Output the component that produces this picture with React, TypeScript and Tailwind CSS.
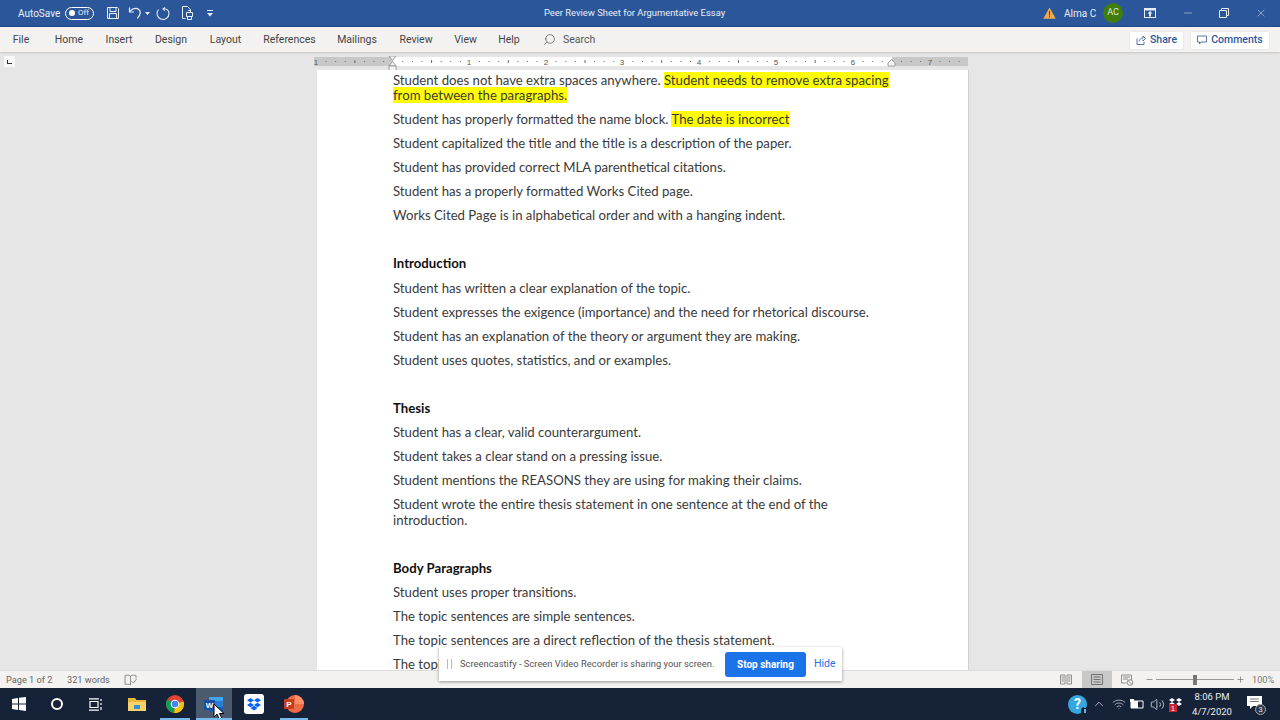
import { ChevronUp, Minus, Plus, Search, Volume2, Wifi, X } from "lucide-react";

const tabs = [
  ["File", "w-[42px]"],
  ["Home", "w-[54px]"],
  ["Insert", "w-[46px]"],
  ["Design", "w-[58px]"],
  ["Layout", "w-[51px]"],
  ["References", "w-[77px]"],
  ["Mailings", "w-[58px]"],
  ["Review", "w-[60px]"],
  ["View", "w-[39px]"],
  ["Help", "w-[48px]"],
];

type Para = { text?: string; mark?: string; bold?: boolean; blank?: boolean; cls?: string };

const paragraphs: Para[] = [
  { text: "Student does not have extra spaces anywhere. ", mark: "Student needs to remove extra spacing from between the paragraphs." },
  { text: "Student has properly formatted the name block. ", mark: "The date is incorrect" },
  { text: "Student capitalized the title and the title is a description of the paper." },
  { text: "Student has provided correct MLA parenthetical citations." },
  { text: "Student has a properly formatted Works Cited page." },
  { text: "Works Cited Page is in alphabetical order and with a hanging indent." },
  { blank: true },
  { text: "Introduction", bold: true, cls: "mb-[10px]" },
  { text: "Student has written a clear explanation of the topic." },
  { text: "Student expresses the exigence (importance) and the need for rhetorical discourse." },
  { text: "Student has an explanation of the theory or argument they are making." },
  { text: "Student uses quotes, statistics, and or examples." },
  { blank: true },
  { text: "Thesis", bold: true },
  { text: "Student has a clear, valid counterargument." },
  { text: "Student takes a clear stand on a pressing issue." },
  { text: "Student mentions the REASONS they are using for making their claims." },
  { text: "Student wrote the entire thesis statement in one sentence at the end of the introduction.", cls: "leading-[15.500px]" },
  { blank: true },
  { text: "Body Paragraphs", bold: true },
  { text: "Student uses proper transitions." },
  { text: "The topic sentences are simple sentences." },
  { text: "The topic sentences are a direct reflection of the thesis statement." },
  { text: "The topic sentences are clear and concise." },
];

function Ruler() {
  const ticks: React.ReactNode[] = [];
  for (let i = 0; i < 68; i++) {
    const x = 2 + i * 9.59;
    const major = i % 8 === 0;
    const half = i % 8 === 4;
    if (major) continue;
    ticks.push(
      <rect key={i} x={x} y={half ? 3 : 4} width="1" height={half ? 3 : 1} fill="#6b6b6b" />
    );
  }
  const nums = [
    [2, "1"],
    [155, "1"],
    [232, "2"],
    [308, "3"],
    [385, "4"],
    [462, "5"],
    [539, "6"],
    [616, "7"],
  ] as const;
  return (
    <svg width="654" height="15" viewBox="0 0 654 15" className="block">
      <g transform="translate(0 1)">
        <rect x="0" y="0" width="654" height="9" fill="#c8c8c8" />
        <rect x="78" y="0" width="500" height="9" fill="#ffffff" />
        {ticks}
        {nums.map(([x, n], i) => (
          <text key={i} x={x} y="7.5" fontSize="8" textAnchor="middle" fill="#555" fontFamily="Liberation Sans, sans-serif">
            {n}
          </text>
        ))}
        <path d="M75 -1h7l-3.5 4.5zM75 9h7l-3.5 -4.5z" fill="#f4f4f4" stroke="#8a8a8a" strokeWidth="0.8" />
        <rect x="75" y="9" width="7" height="5" fill="#f4f4f4" stroke="#8a8a8a" strokeWidth="0.8" />
        <path d="M574 9V6l3.500-3.500 3.500 3.500v3z" fill="#f4f4f4" stroke="#8a8a8a" strokeWidth="0.8" />
      </g>
    </svg>
  );
}

function TitleBar() {
  return (
    <div className="h-[27px] shrink-0 bg-[#2b579a] flex items-center text-[#e8eef7] border-b border-[#234a86]">
      <span className="ml-[18px] w-[41px] text-[10px] whitespace-nowrap">AutoSave</span>
      <div className="ml-[6px] w-[29px] h-[13px] rounded-full border border-white flex items-center">
        <span className="ml-[3px] w-[6px] h-[6px] rounded-full bg-white" />
        <span className="ml-[3px] text-[8px] leading-none">Off</span>
      </div>
      <svg width="16" height="16" viewBox="0 0 16 16" className="ml-[11px]" fill="none" stroke="#e8eef7" strokeWidth="1">
        <path d="M2.500 2.500h10l1 1v10h-11z" />
        <path d="M5 2.500v4h6v-4M4.500 13.500v-5h7v5" />
      </svg>
      <svg width="16" height="16" viewBox="0 0 16 16" className="ml-[6px]" fill="none" stroke="#e8eef7" strokeWidth="1.200">
        <path d="M2.500 2.500v4.500h4.500" />
        <path d="M2.800 6.800c2-3.500 6.500-4.300 9-2.300 2.500 2 1.800 5.500-1.500 8.800" />
      </svg>
      <svg width="5" height="3" viewBox="0 0 5 3" className="ml-[2px]"><path d="M0 0h5l-2.500 3z" fill="#e8eef7" /></svg>
      <svg width="16" height="16" viewBox="0 0 16 16" className="ml-[5px]" fill="none" stroke="#e8eef7" strokeWidth="1.100">
        <path d="M10 2.500l-2 1.500 2 1.500" />
        <path d="M9 3.700c3.200 0 5 2.200 5 4.800a6 6 0 1 1-10.500-4" />
      </svg>
      <svg width="14" height="16" viewBox="0 0 14 16" className="ml-[9px]" fill="none" stroke="#e8eef7" strokeWidth="1">
        <path d="M2.500 1.500h5l3 3v3M2.500 1.500v12h3" />
        <path d="M6.500 7.500h6v4h-6zM7.500 11.500v3h4v-3M8 5.500h2" />
      </svg>
      <svg width="6" height="7" viewBox="0 0 6 7" className="ml-[13px]"><path d="M0 0h6v1H0zM0 3h6L3 6.500z" fill="#e8eef7" /></svg>
      <span className="absolute left-[544px] text-[9.400px] text-[#e8eef7] whitespace-nowrap">Peer Review Sheet for Argumentative Essay</span>
      <div className="ml-auto flex items-center h-full">
        <svg width="13" height="12" viewBox="0 0 13 12"><path d="M6.500 0.500L12.800 11.800H0.200z" fill="#f0a94a" /><path d="M6 4h1v4.500H6zM6 9.300h1v1H6z" fill="#5a3a10" /></svg>
        <span className="ml-[8px] w-[31px] text-[10px] whitespace-nowrap">Alma C</span>
        <span className="ml-[8px] w-[20px] h-[20px] rounded-full bg-[#3e7d0e] text-[9px] flex items-center justify-center text-[#dfe9d6]">AC</span>
        <svg width="12" height="10" viewBox="0 0 12 10" className="ml-[21px]"><rect x="0.500" y="0.500" width="11" height="9" fill="none" stroke="#e8eef7" /><rect x="0.500" y="0.500" width="11" height="2" fill="#e8eef7" /><path d="M6 3l2.500 2.500h-1.500v3h-2v-3H3.500z" fill="#e8eef7" /></svg>
        <Minus className="ml-[26px] w-[12px] h-[12px]" strokeWidth={1} />
        <svg width="10" height="10" viewBox="0 0 10 10" className="ml-[25px]" fill="none" stroke="#e8eef7"><path d="M.5 2.500h7v7h-7zM2.500 2.500v-2h7v7h-2" /></svg>
        <X className="ml-[26px] mr-[13px] w-[12px] h-[12px]" strokeWidth={1} />
      </div>
    </div>
  );
}

function Ribbon() {
  return (
    <div className="h-[25px] shrink-0 bg-[#f3f2f1] flex items-center text-[10.500px] text-[#444] shadow-[0_1px_2px_rgba(0,0,0,0.15)] z-10">
      {tabs.map(([t, w]) => (
        <span key={t} className={`${w} text-center`}>{t}</span>
      ))}
      <Search className="ml-[10px] w-[13px] h-[13px] text-[#555] -scale-x-100" strokeWidth={1.300} />
      <span className="ml-[7px] text-[#555]">Search</span>
      <div className="ml-auto mt-[1px] flex items-center gap-[8px] mr-[11px]">
        <div className="h-[17px] w-[53px] bg-white shadow-[0_0_1px_rgba(0,0,0,0.2)] flex items-center justify-center gap-[4px] text-[#2b579a] text-[10.500px] font-medium">
          <svg width="10" height="10" viewBox="0 0 10 10" fill="none" stroke="#2b579a" strokeWidth="0.800"><path d="M1 3.500v6h7v-3M3 6.500c.5-2.500 2.500-3.500 4-3.500V1l2.500 2.500L7 6V4.500" /></svg>
          Share
        </div>
        <div className="h-[17px] w-[78px] bg-white shadow-[0_0_1px_rgba(0,0,0,0.2)] flex items-center justify-center gap-[4px] text-[#2b579a] text-[10.500px] font-medium">
          <svg width="10" height="10" viewBox="0 0 10 10" fill="none" stroke="#2b579a" strokeWidth="0.800"><path d="M.5 1h9v6H4L2.500 9V7h-2z" /></svg>
          Comments
        </div>
      </div>
    </div>
  );
}

function Document() {
  return (
    <div className="flex-1 min-h-0 bg-[#e6e6e6] relative overflow-hidden flex flex-col items-start">
      <div className="absolute left-[4px] top-[4px] w-[11px] h-[11px] bg-[#f7f7f7] flex items-center justify-center">
        <span className="w-[5px] h-[4px] border-l border-b border-[#333]" />
      </div>
      <div className="ml-[314px] mt-[4px] h-[14px] shrink-0">
        <Ruler />
      </div>
      <div className="ml-[317px] w-[652px] flex-1 bg-white pl-[76px] pr-[76px] pt-[3px] text-[#3a3a3a] [font-family:'Lato',sans-serif] text-[13.200px] leading-[15px] border-r border-[#d0d0d0]">
        {paragraphs.map((p, i) =>
          p.blank ? (
            <p key={i} className="h-[15px] mb-[9px]" />
          ) : (
            <p key={i} className={`${p.cls?.includes("mb-") ? "" : "mb-[9px]"} ${p.cls ?? ""} ${p.bold ? "font-bold text-[#111]" : ""}`}>
              {p.text}
              {p.mark && <mark className="bg-[#ffff00] text-[#3a3a3a]">{p.mark}</mark>}
            </p>
          )
        )}
      </div>
    </div>
  );
}

function SharePopup() {
  return (
    <div className="absolute left-[439px] top-[647px] w-[403px] h-[34px] bg-white shadow-[0_1px_3px_rgba(0,0,0,0.4)] flex items-center z-10">
      <span className="ml-[8px] w-[5px] h-[10px] border-x border-[#bbb]" />
      <span className="ml-[8px] w-[257px] whitespace-nowrap text-[9.400px] text-[#555]">Screencastify - Screen Video Recorder is sharing your screen.</span>
      <span className="ml-[8px] w-[81px] h-[25px] rounded-[3px] bg-[#1a73e8] text-white text-[10px] font-bold flex items-center justify-center whitespace-nowrap">Stop sharing</span>
      <span className="ml-[8px] text-[10.500px] text-[#1a73e8]">Hide</span>
    </div>
  );
}

function StatusBar() {
  return (
    <div className="h-[18px] shrink-0 bg-[#f3f2f1] flex items-center text-[9.200px] text-[#666] border-t border-[#dcdcdc]">
      <span className="ml-[6px] w-[46px] whitespace-nowrap">Page 1 of 2</span>
      <span className="ml-[15px] w-[42px] whitespace-nowrap">321 words</span>
      <svg width="13" height="12" viewBox="0 0 13 12" className="ml-[15px]" fill="none" stroke="#777" strokeWidth="0.800"><path d="M6.500 2v9M6.500 2C5 1 3 1 1 1.500v9c2-.5 4-.5 5.500.5M6.500 2C8 1 10 1 12 1.500v3M7.500 7l2 2 3-4" /></svg>
      <div className="ml-auto flex items-center h-full">
        <svg width="12" height="11" viewBox="0 0 12 11" fill="none" stroke="#777" strokeWidth="0.800"><path d="M.5 1h4.500v9H.5zM7 1h4.500v9H7zM1.500 3h2.500M1.500 5h2.500M1.500 7h2.500M8 3h2.500M8 5h2.500M8 7h2.500" /></svg>
        <div className="ml-[10px] w-[30px] h-full bg-[#c8c8c8] flex items-center justify-center">
          <svg width="12" height="11" viewBox="0 0 12 11" fill="none" stroke="#666" strokeWidth="0.900"><path d="M.5.500h11v10H.5zM2.500 3h7M2.500 5.500h7M2.500 8h7" /></svg>
        </div>
        <svg width="13" height="12" viewBox="0 0 13 12" className="ml-[9px]" fill="none" stroke="#777" strokeWidth="0.800"><path d="M.5 1h10v5M.5 1v8h5M2 3h7M2 5h5" /><circle cx="9" cy="8.500" r="2.800" /><path d="M7 6.500l4 4" /></svg>
        <Minus className="ml-[11px] w-[9px] h-[9px] text-[#555]" strokeWidth={1.500} />
        <div className="ml-[2px] w-[78px] h-[1px] bg-[#999] flex items-center justify-center">
          <span className="w-[4px] h-[10px] bg-[#777]" />
        </div>
        <Plus className="ml-[2px] w-[9px] h-[9px] text-[#555]" strokeWidth={1.500} />
        <span className="ml-[7px] mr-[7px] w-[21px] whitespace-nowrap text-[#777]">100%</span>
      </div>
    </div>
  );
}

function TaskSlot({ w, active, line, children }: { w: string; active?: boolean; line?: boolean; children: React.ReactNode }) {
  return (
    <div className={`${w} h-full relative flex items-center justify-center ${active ? "bg-[#4b5a6e]" : ""}`}>
      {children}
      {line && <span className="absolute bottom-0 left-0 right-0 h-[2px] bg-[#76b9ed]" />}
    </div>
  );
}

function Taskbar() {
  return (
    <div className="h-[32px] shrink-0 bg-[#152238] flex items-center text-white">
      <TaskSlot w="w-[38px]">
        <svg width="14" height="14" viewBox="0 0 14 14"><path d="M0 2l6-1v5.500H0zM7 .800L14 0v6.500H7zM0 7.500h6V13l-6-1zM7 7.500h7V14l-7-1z" fill="#fff" /></svg>
      </TaskSlot>
      <TaskSlot w="w-[38px]">
        <span className="w-[12px] h-[12px] rounded-full border-[2px] border-white" />
      </TaskSlot>
      <TaskSlot w="w-[38px]">
        <svg width="14" height="13" viewBox="0 0 14 13" fill="none" stroke="#fff" strokeWidth="1.200"><path d="M2 3.500h8v6H2zM1 .800h10M1 12.200h10M13 1v2M13 5v2M13 9v3" /></svg>
      </TaskSlot>
      <TaskSlot w="w-[46px]">
        <svg width="18" height="15" viewBox="0 0 18 15"><path d="M0 1h7l1.500 2H18v11H0z" fill="#e8b93e" /><path d="M0 5h18v9H0z" fill="#f5d36a" /><rect x="6" y="8" width="6" height="4" fill="#3a8fd0" /></svg>
      </TaskSlot>
      <TaskSlot w="w-[30px]" line>
        <svg width="18" height="18" viewBox="0 0 18 18">
          <circle cx="9" cy="9" r="9" fill="#db4437" />
          <path d="M9 9L17.700 6.600A9 9 0 0 1 8 18z" fill="#f4c20d" />
          <path d="M9 9L8 18A9 9 0 0 1 1.200 4.500z" fill="#0f9d58" />
          <circle cx="9" cy="9" r="4.300" fill="#fff" />
          <circle cx="9" cy="9" r="3.300" fill="#4285f4" />
        </svg>
      </TaskSlot>
      <div className="ml-[6px] w-[36px] h-full">
        <TaskSlot w="w-full" active line>
          <svg width="20" height="17" viewBox="0 0 20 17">
            <path d="M5 1h14v15H5z" fill="#2b7cd3" />
            <path d="M5 1h14v4H5z" fill="#41a5ee" />
            <path d="M5 11h14v5H5z" fill="#185abd" />
            <rect x="0" y="4" width="11" height="10" rx="1" fill="#1a4fa0" />
            <text x="5.500" y="12" fontSize="8" fontWeight="700" fill="#fff" textAnchor="middle" fontFamily="Liberation Sans, sans-serif">W</text>
          </svg>
          <svg width="13" height="18" viewBox="0 0 13 18" className="absolute left-[17px] top-[15px]">
            <path d="M1 1v13l3-3 2.500 5.500 2.500-1L6.500 10.500H11z" fill="#fff" stroke="#000" strokeWidth="1" />
          </svg>
        </TaskSlot>
      </div>
      <TaskSlot w="w-[44px]">
        <div className="w-[20px] h-[20px] rounded-[3px] bg-white flex items-center justify-center">
          <svg width="14" height="13" viewBox="0 0 14 13" fill="#0061ff"><path d="M3.500 0L7 2.300 3.500 4.600 0 2.300zM10.500 0L14 2.300l-3.500 2.300L7 2.300zM0 7l3.500-2.300L7 7 3.500 9.300zM14 7l-3.500-2.300L7 7l3.500 2.300zM3.500 10L7 7.800l3.500 2.200L7 12.500z" /></svg>
        </div>
      </TaskSlot>
      <div className="ml-[4px] w-[28px] h-full">
        <TaskSlot w="w-full" line>
          <svg width="20" height="18" viewBox="0 0 20 18">
            <circle cx="11" cy="9" r="9" fill="#ed6c47" />
            <path d="M11 0a9 9 0 0 1 9 9h-9z" fill="#ff8f6b" />
            <rect x="0" y="4" width="10" height="10" rx="1" fill="#c43e1c" />
            <text x="5" y="12" fontSize="8" fontWeight="700" fill="#fff" textAnchor="middle" fontFamily="Liberation Sans, sans-serif">P</text>
          </svg>
        </TaskSlot>
      </div>
      <div className="ml-auto flex items-center h-full text-[#e8edf3]">
        <div className="w-[19px] h-[19px] rounded-full bg-[#35a7de] text-white font-bold text-[14px] flex items-center justify-center relative">
          ?
          <span className="absolute right-[-2px] bottom-[-1px] w-[8px] h-[8px] rounded-full bg-[#152238] text-[7px] leading-[8px] text-center">i</span>
        </div>
        <ChevronUp className="ml-[5px] w-[14px] h-[14px]" strokeWidth={1.200} />
        <Wifi className="ml-[6px] w-[14px] h-[14px] text-[#b7bfca]" strokeWidth={1.400} />
        <svg width="14" height="10" viewBox="0 0 14 10" className="ml-[4px]"><path d="M1 2h12v7H1z" fill="none" stroke="#fff" /><path d="M1 2h7v7H1z" fill="#fff" /><path d="M0 0h4v3H0z" fill="#fff" /></svg>
        <Volume2 className="ml-[6px] w-[15px] h-[15px]" strokeWidth={1.200} />
        <svg width="15" height="15" viewBox="0 0 15 15" className="ml-[3px]" fill="#fff"><path d="M4 1l3 2-3 2-3-2zM11 1l3 2-3 2-3-2zM1 7l3-2 3 2-3 2zM14 7l-3-2-3 2 3 2z" /><rect x="1" y="7" width="8" height="8" fill="#d1202e" /><text x="5" y="14" fontSize="7" textAnchor="middle" fontFamily="Liberation Sans, sans-serif">1</text></svg>
        <div className="ml-[3px] w-[52px] flex flex-col items-center text-[9.500px] leading-[15px]">
          <span>8:06 PM</span>
          <span>4/7/2020</span>
        </div>
        <div className="ml-[9px] mr-[17px] relative w-[16px] h-[16px]">
          <svg width="15" height="14" viewBox="0 0 15 14"><path d="M0 0h15v10H6l-3 3v-3H0z" fill="#fff" /><path d="M3 3h9M3 5.500h9" stroke="#555" strokeWidth="0.800" /></svg>
          <span className="absolute right-[-3px] bottom-[-3px] w-[11px] h-[11px] rounded-full bg-[#2b3648] border border-[#aaa] text-[7.500px] leading-[9px] text-center">3</span>
        </div>
      </div>
    </div>
  );
}

export default function App() {
  return (
    <div className="w-[1280px] h-[720px] flex flex-col overflow-hidden relative [font-family:'Roboto','Liberation_Sans',sans-serif]">
      <TitleBar />
      <Ribbon />
      <Document />
      <StatusBar />
      <Taskbar />
      <SharePopup />
    </div>
  );
}
